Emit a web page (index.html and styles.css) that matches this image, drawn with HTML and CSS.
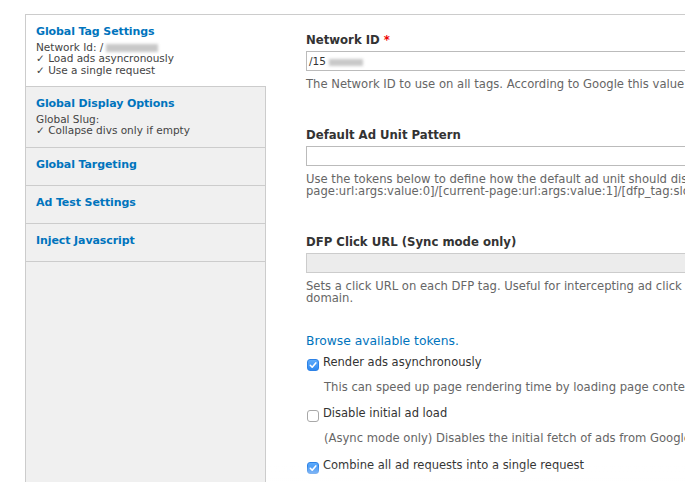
FILE: index.html
```html
<!DOCTYPE html>
<html lang="en">
<head>
    <meta charset="UTF-8">
    <title>DFP Global Settings</title>
    <link rel="stylesheet" href="styles.css">
</head>
<body>
    <div class="page">
        <div class="tabs">
            <div class="tab active">
                <a class="tab-title">Global Tag Settings</a>
                <div class="summary">Network Id: /<span class="blur blur-side"></span><br>✓ Load ads asyncronously<br>✓ Use a single request</div>
            </div>
            <div class="tab">
                <a class="tab-title">Global Display Options</a>
                <div class="summary">Global Slug:<br>✓ Collapse divs only if empty</div>
            </div>
            <div class="tab">
                <a class="tab-title">Global Targeting</a>
            </div>
            <div class="tab">
                <a class="tab-title">Ad Test Settings</a>
            </div>
            <div class="tab">
                <a class="tab-title">Inject Javascript</a>
            </div>
        </div>

        <div class="main">
            <div class="field">
                <label>Network ID <span class="req">*</span></label>
                <div class="input">/15<span class="blur blur-input"></span></div>
                <div class="desc">The Network ID to use on all tags. According to Google this value should begin with a /.</div>
            </div>
            <div class="field">
                <label>Default Ad Unit Pattern</label>
                <div class="input"></div>
                <div class="desc">Use the tokens below to define how the default ad unit should display. Example: [dfp_tag:network_id]/[current-<br>page:url:args:value:0]/[current-page:url:args:value:1]/[dfp_tag:slot]</div>
            </div>
            <div class="field">
                <label>DFP Click URL (Sync mode only)</label>
                <div class="input disabled"></div>
                <div class="desc">Sets a click URL on each DFP tag. Useful for intercepting ad click calls for reporting. Values should be an absolute URL including<br>domain.</div>
            </div>
            <a class="browse">Browse available tokens.</a>

            <div class="options">
                <div class="check-item">
                    <div class="check-row">
                        <span class="box checked"><svg width="10" height="10" viewBox="0 0 10 10"><path d="M2.3 5.3 L4.2 7.2 L7.8 2.9" fill="none" stroke="#fff" stroke-width="1.6" stroke-linecap="round" stroke-linejoin="round"/></svg></span>
                        Render ads asynchronously
                    </div>
                    <div class="check-desc">This can speed up page rendering time by loading page content without waiting for ads to load.</div>
                </div>
                <div class="check-item">
                    <div class="check-row">
                        <span class="box"></span>
                        Disable initial ad load
                    </div>
                    <div class="check-desc">(Async mode only) Disables the initial fetch of ads from Google when the page is first loaded. Calls to refresh() can be used to fetch ads.</div>
                </div>
                <div class="check-item">
                    <div class="check-row">
                        <span class="box checked"><svg width="10" height="10" viewBox="0 0 10 10"><path d="M2.3 5.3 L4.2 7.2 L7.8 2.9" fill="none" stroke="#fff" stroke-width="1.6" stroke-linecap="round" stroke-linejoin="round"/></svg></span>
                        Combine all ad requests into a single request
                    </div>
                    <div class="check-desc">This can speed up page rendering time by reducing the number of requests made to Google.</div>
                </div>
            </div>
        </div>
    </div>
    <div class="fade"></div>
</body>
</html>
```

FILE: styles.css
```css
body {
    margin: 0;
    background: #fff;
    font-family: "DejaVu Sans", sans-serif;
    color: #333;
    overflow: hidden;
}
.page {
    display: flex;
    margin: 14px 0 0 25px;
    border-top: 1px solid #ccc;
    height: 467px;
}
.tabs {
    flex: none;
    width: 239px;
    background: #f0f0f0;
    border-left: 1px solid #ccc;
    border-right: 1px solid #ccc;
}
.tab {
    padding: 8px 10px 12px;
    border-bottom: 1px solid #ccc;
}
.tab.active {
    background: #fff;
    margin-right: -1px;
}
.tab-title {
    display: block;
    font-weight: bold;
    font-size: 11px;
    line-height: 17px;
    letter-spacing: -0.1px;
    color: #0074bd;
}
.summary {
    margin: 1.5px 0 -2px;
    font-size: 10.5px;
    line-height: 11.5px;
    color: #444;
}
.blur {
    display: inline-block;
    background: #c8c8c8;
    filter: blur(1.5px);
    vertical-align: -1px;
}
.blur-side {
    width: 52px;
    height: 8px;
    margin-left: 3px;
}
.blur-input {
    width: 34px;
    height: 7px;
    margin-left: 3px;
}
.main {
    flex: none;
    width: 700px;
    padding: 18px 0 0 40px;
}
.field + .field {
    margin-top: 37px;
}
.field label {
    display: block;
    font-weight: bold;
    font-size: 11.7px;
    line-height: 15px;
    margin-bottom: 3px;
}
.req {
    color: #e00;
}
.input {
    height: 20px;
    box-sizing: border-box;
    border: 1px solid #bbb;
    padding: 0 2px;
    font-size: 10.5px;
    line-height: 18px;
    color: #333;
}
.input.disabled {
    background: #ececec;
    border-color: #ccc;
}
.desc {
    margin-top: 7px;
    font-size: 11.6px;
    line-height: 12.5px;
    color: #666;
    white-space: nowrap;
}
.browse {
    display: block;
    margin-top: 29px;
    font-size: 12.3px;
    line-height: 15px;
    color: #0074bd;
}
.options {
    margin-top: 6px;
}
.check-item + .check-item {
    margin-top: 13px;
}
.check-row {
    display: flex;
    align-items: flex-start;
    font-size: 11.5px;
    line-height: 15px;
    color: #333;
    white-space: nowrap;
}
.box {
    flex: none;
    display: flex;
    align-items: center;
    justify-content: center;
    width: 12px;
    height: 12px;
    box-sizing: border-box;
    margin: 4px 4px 0 1px;
    border: 1px solid #a8a8a8;
    border-radius: 3px;
    background: #fff;
}
.box.checked {
    border-color: #2d82e6;
    background: linear-gradient(#5eabfb, #2f88f0);
}
.check-desc {
    margin: 10px 0 0 18px;
    font-size: 11.6px;
    line-height: 12.5px;
    color: #666;
    white-space: nowrap;
}
.fade {
    position: fixed;
    left: 266px;
    right: 0;
    bottom: 0;
    height: 16px;
    background: linear-gradient(rgba(255, 255, 255, 0), rgba(255, 255, 255, 0.85));
    pointer-events: none;
}
```
